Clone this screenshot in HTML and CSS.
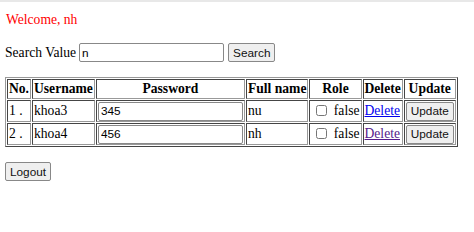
FILE: index.html
```html
<!DOCTYPE html>
<html lang="en">
<head>
  <link rel="stylesheet" href="styles.css">
  <title>Users</title>
</head>
<body>
  <p class="welcome">Welcome, nh</p>
  <form class="search">
    <span>Search Value</span>
    <input type="text" class="text-input" value="n">
    <button type="button" class="btn">Search</button>
  </form>
  <table class="users" border="1">
    <tr>
      <th>No.</th>
      <th>Username</th>
      <th>Password</th>
      <th>Full name</th>
      <th>Role</th>
      <th>Delete</th>
      <th>Update</th>
    </tr>
    <tr>
      <td>1 .</td>
      <td>khoa3</td>
      <td><input type="text" class="text-input" value="345"></td>
      <td>nu</td>
      <td><input type="checkbox" class="check"> false</td>
      <td><a href="#" class="link">Delete</a></td>
      <td><button type="button" class="btn">Update</button></td>
    </tr>
    <tr>
      <td>2 .</td>
      <td>khoa4</td>
      <td><input type="text" class="text-input" value="456"></td>
      <td>nh</td>
      <td><input type="checkbox" class="check"> false</td>
      <td><a href="#" class="link visited">Delete</a></td>
      <td><button type="button" class="btn">Update</button></td>
    </tr>
  </table>
  <button type="button" class="btn logout">Logout</button>
</body>
</html>
```
FILE: styles.css
```css
html {
  border-top: 2px solid #e8e8e8;
}
body {
  font-family: "Liberation Serif", serif;
  font-size: 13.6px;
  margin: 0 5px;
}
.welcome {
  color: red;
  margin: 10px 0 0 1px;
  line-height: 16px;
}
.search {
  display: flex;
  align-items: center;
  margin-top: 15px;
  height: 19px;
}
.search span {
  margin-right: 3px;
}
.search .btn {
  margin-left: 4px;
}
.text-input {
  box-sizing: border-box;
  width: 145px;
  height: 19px;
  margin: 0;
  padding: 1px 2px;
  font-family: "Liberation Sans", Arial, sans-serif;
  font-size: 11.8px;
  border: 1px solid #888;
  border-radius: 2px;
}
.btn {
  box-sizing: border-box;
  height: 19px;
  margin: 0;
  padding: 0 4px;
  font-family: "Liberation Sans", Arial, sans-serif;
  font-size: 11.8px;
  color: #111;
  background-color: #efefef;
  border: 1px solid #888;
  border-radius: 2px;
}
.users {
  margin-top: 15px;
  border-color: #999;
  border-spacing: 1px;
}
.users th, .users td {
  padding: 0 1px;
  border-color: #999;
}
.users th {
  line-height: 18px;
}
.users td {
  height: 20px;
}
.check {
  width: 11px;
  height: 11px;
  margin: 0 3px 0 5px;
  vertical-align: -1px;
}
.link {
  color: #0000ee;
}
.link.visited {
  color: #551a8b;
}
.logout {
  display: block;
  margin-top: 15px;
}
```
